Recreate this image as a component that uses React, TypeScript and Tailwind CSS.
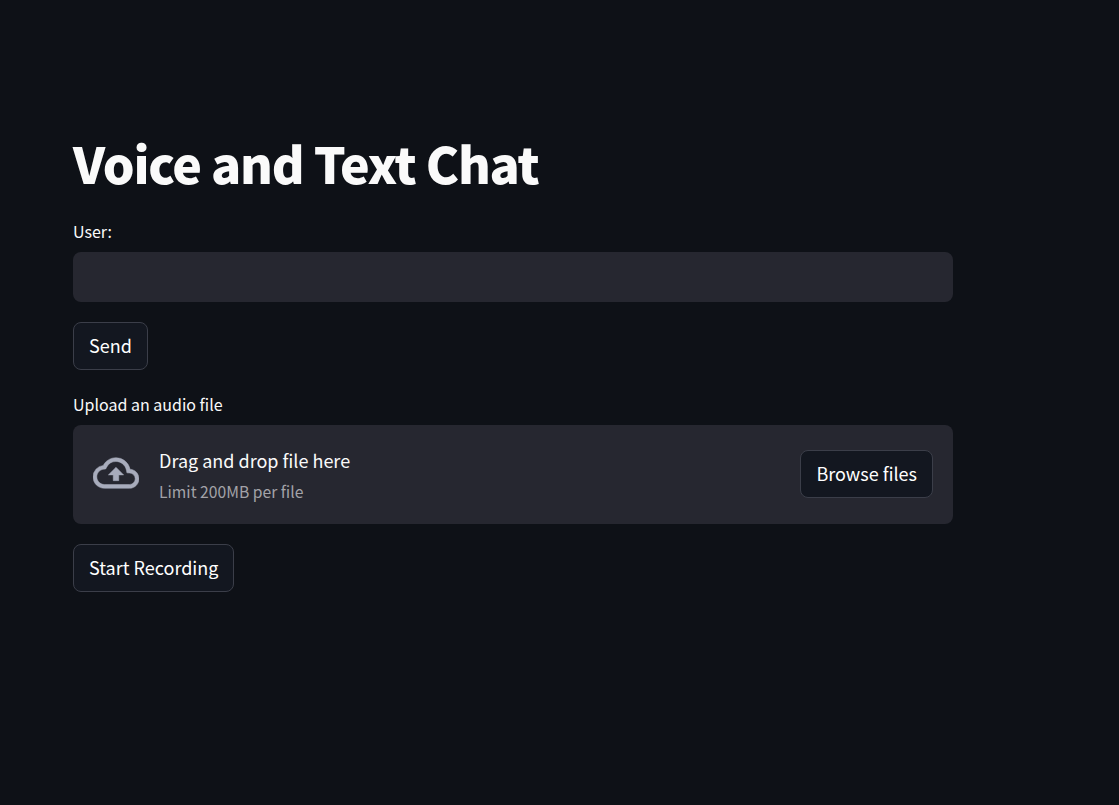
const font = "font-['Noto_Sans_CJK_JP','Noto_Sans',sans-serif]";

const Btn = ({ label }: { label: string }) => (
  <button className="h-12 w-fit rounded-lg border border-[#3b3e49] bg-[#131720] px-[15px] pb-[2px] text-[18px] leading-none text-white">
    {label}
  </button>
);

// cloud with the up arrow, stroked a little so it is as heavy as the reference
const CloudIcon = () => (
  <svg viewBox="0 0 24 24" className="mb-[3px] h-[46px] w-[46px] shrink-0 text-[#a8acbc]" fill="currentColor" stroke="currentColor" strokeWidth={0.25}>
    <path d="M19.35 10.04A7.49 7.49 0 0 0 12 4C9.11 4 6.6 5.64 5.35 8.04A5.994 5.994 0 0 0 0 14c0 3.31 2.69 6 6 6h13c2.76 0 5-2.24 5-5 0-2.64-2.05-4.78-4.65-4.96zM19 18H6c-2.21 0-4-1.79-4-4 0-2.05 1.53-3.76 3.56-3.97l1.07-.11.5-.95A5.469 5.469 0 0 1 12 6c2.62 0 4.88 1.86 5.39 4.43l.3 1.5 1.53.11A2.98 2.98 0 0 1 22 15c0 1.65-1.35 3-3 3zM8 13h2.55v3h2.9v-3H16l-4-4z" />
  </svg>
);

export default function App() {
  return (
    <div className={`min-h-screen bg-[#0e1117] text-[#fafafa] ${font}`}>
      <div className="flex w-[953px] flex-col pl-[73px] pt-[128px]">
        <h1 className="text-[50px] leading-[68px] font-black tracking-[-1.23px]">Voice and Text Chat</h1>

        <label className="mt-[25px] text-[16px] leading-5">User:</label>
        <div className="mt-[11px] h-[50px] rounded-lg bg-[#262730]" />

        <div className="mt-5">
          <Btn label="Send" />
        </div>

        <label className="mt-[24px] text-[16px] leading-5">Upload an audio file</label>
        <div className="mt-[11px] flex h-[99px] items-center rounded-lg bg-[#262730] px-5">
          <CloudIcon />
          <div className="mb-[2px] ml-[20px] flex flex-col">
            <span className="text-[18px] leading-7">Drag and drop file here</span>
            <span className="mt-[8px] text-[15.7px] leading-5 text-[#a3a3a8]">Limit 200MB per file</span>
          </div>
          <div className="mb-0.5 ml-auto">
            <Btn label="Browse files" />
          </div>
        </div>

        <div className="mt-5">
          <Btn label="Start Recording" />
        </div>
      </div>
    </div>
  );
}
